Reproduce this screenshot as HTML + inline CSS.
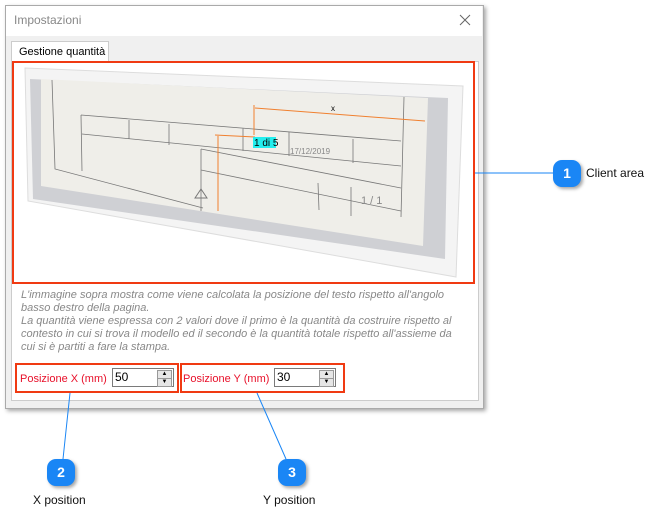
<!DOCTYPE html>
<html><head><meta charset="utf-8"><style>
body{margin:0;width:664px;height:524px;background:#fff;position:relative;overflow:hidden;font-family:"Liberation Sans",Arial,sans-serif}
.a{position:absolute}
.badge{position:absolute;width:28px;height:27px;border-radius:9px;background:#1a86f5;color:#fff;font-weight:bold;font-size:14px;text-align:center;line-height:27px;box-shadow:2px 2px 3px rgba(0,0,0,.35)}
.lbl{position:absolute;font-size:12px;color:#111}
.red{position:absolute;border:2px solid #f03a12;box-sizing:border-box}
.spin{position:absolute;background:#fff;border:1px solid #7a7a7a;height:19px;font-size:12px;box-sizing:border-box;padding-left:2px;line-height:17px}
.btn{position:absolute;right:1px;width:13px;height:7px;background:#e6e6e6;border:1px solid #999;font-size:6px;line-height:7px;text-align:center}
</style></head><body>
<div class="a" style="left:5px;top:5px;width:477px;height:402px;background:#f0f0f0;border:1px solid #aaa;box-shadow:2px 2px 4px rgba(0,0,0,.35)"></div>
<div class="a" style="left:6px;top:6px;width:476px;height:30px;background:#fff"></div>
<div class="a" style="left:14px;top:13px;font-size:12px;color:#888">Impostazioni</div>
<svg class="a" style="left:459px;top:14px" width="12" height="12"><path d="M1 1L11 11M11 1L1 11" stroke="#666" stroke-width="1"/></svg>
<div class="a" style="left:11px;top:41px;width:98px;height:21px;background:#fff;border:1px solid #ccc;border-bottom:none;font-size:11px;line-height:20px;padding-left:7px;box-sizing:border-box">Gestione quantità</div>
<div class="a" style="left:11px;top:61px;width:468px;height:340px;background:#fff;border:1px solid #ccc;box-sizing:border-box"></div>
<svg class="a" style="left:15px;top:63px" width="457" height="220">
<polygon points="10,5 448,23 441,214 13,138" fill="#f4f4f4" stroke="#ddd"/>
<polygon points="15,16 433,35 430,196 18,136" fill="#cfd0d4"/>
<polygon points="26,16 413,35 408,183 26,123" fill="#efeee9"/>
<path d="M37,17L40,106L188,145 M389,34L386,154 M66,52L386,78 M67,71L386,103 M186,86L386,125 M186,107L386,148 M66,52L67,108 M114,57L114,76 M154,61L154,82 M228,65L228,88 M274,69L274,93 M338,76L338,100 M303,120L304,147 M336,124L336,153 M186,86L186,148" stroke="#777" fill="none" stroke-width="0.8"/>
<path d="M239,42L239,72 M240,45L410,58 M203,73L203,148 M200,72L240,74" stroke="#f08030" fill="none"/>
<text x="316" y="48" font-size="8" fill="#000">x</text>
<rect x="238" y="74" width="23" height="11" fill="#2ee" />
<text x="239" y="83" font-size="10" fill="#000">1 di 5</text>
<text x="275" y="91" font-size="8" fill="#888">17/12/2019</text>
<text x="346" y="141" font-size="11" fill="#888">1 / 1</text>
<path d="M180,135L186,126L192,135Z" fill="none" stroke="#777"/>
</svg>
<div class="red" style="left:12px;top:61px;width:463px;height:223px"></div>
<div class="a" style="left:21px;top:289px;width:442px;font-size:11px;line-height:13px;font-style:italic;color:#888">L'immagine sopra mostra come viene calcolata la posizione del testo rispetto all'angolo basso destro della pagina.<br>La quantità viene espressa con 2 valori dove il primo è la quantità da costruire rispetto al contesto in cui si trova il modello ed il secondo è la quantità totale rispetto all'assieme da cui si è partiti a fare la stampa.</div>
<div class="red" style="left:15px;top:363px;width:164px;height:30px"></div>
<div class="red" style="left:180px;top:363px;width:165px;height:30px"></div>
<div class="a" style="left:20px;top:373px;font-size:11px;color:#e8102a">Posizione X (mm)</div>
<div class="spin" style="left:112px;top:368px;width:62px">50<div class="btn" style="top:1px">▲</div><div class="btn" style="top:9px">▼</div></div>
<div class="a" style="left:183px;top:373px;font-size:11px;color:#e8102a">Posizione Y (mm)</div>
<div class="spin" style="left:274px;top:368px;width:62px">30<div class="btn" style="top:1px">▲</div><div class="btn" style="top:9px">▼</div></div>
<svg class="a" style="left:0;top:0" width="664" height="524"><path d="M475,173L554,173 M70,393L63,459 M257,393L286,459" stroke="#1a86f5" stroke-width="1" fill="none"/></svg>
<div class="badge" style="left:553px;top:160px">1</div>
<div class="lbl" style="left:586px;top:166px">Client area</div>
<div class="badge" style="left:47px;top:459px">2</div>
<div class="lbl" style="left:33px;top:493px">X position</div>
<div class="badge" style="left:278px;top:459px">3</div>
<div class="lbl" style="left:263px;top:493px">Y position</div>
</body></html>
